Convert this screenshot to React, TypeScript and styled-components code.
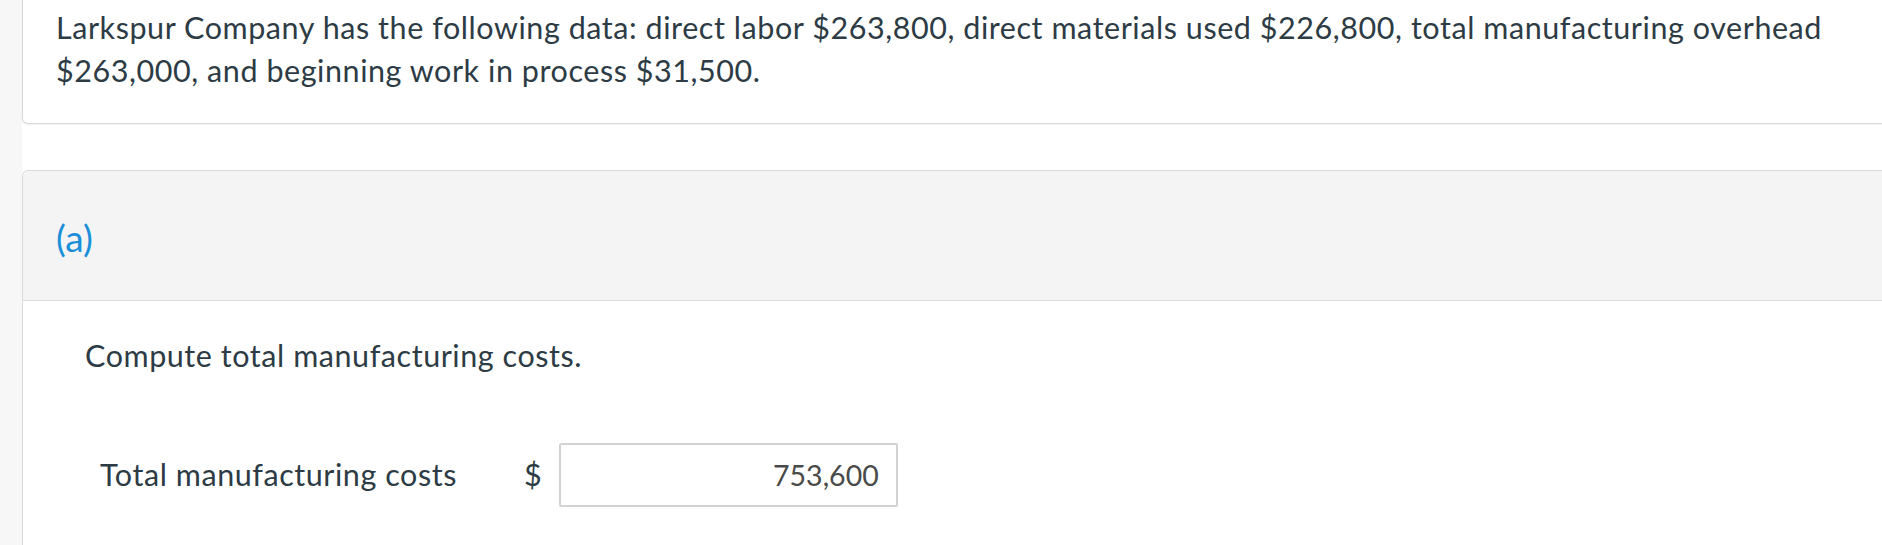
import React, { FC } from "react";
import styled, { createGlobalStyle } from "styled-components";

const GlobalStyle = createGlobalStyle`
  html, body {
    margin: 0;
    padding: 0;
    background: #ffffff;
    overflow: hidden;
  }
  body {
    font-family: Lato, "Open Sans", "Liberation Sans", sans-serif;
    color: #2d3b45;
  }
`;

const Page = styled.div`
  display: flex;
  width: 1882px;
  height: 545px;
  overflow: hidden;
`;

const Rail = styled.div`
  flex: 0 0 22px;
  background: #f7f7f7;
`;

const Main = styled.div`
  flex: 1;
  display: flex;
  flex-direction: column;
  gap: 46px;
  margin-right: -16px;
`;

const QuestionCard = styled.div`
  background: #ffffff;
  border: 1px solid #d9d9d9;
  border-top: none;
  border-radius: 0 0 6px 6px;
  box-shadow: 0 1px 2px rgba(0, 0, 0, 0.06);
  padding: 6px 40px 31px 33px;
`;

const Prompt = styled.p`
  margin: 0;
  font-size: 30.5px;
  letter-spacing: 0.56px;
  line-height: 43.2px;
`;

const PartCard = styled.section`
  flex: 1;
  background: #ffffff;
  border: 1px solid #dadada;
  border-bottom: none;
  border-radius: 6px 0 0 0;
`;

const PartHeader = styled.header`
  background: #f4f4f4;
  border-bottom: 1px solid #dadada;
  border-radius: 6px 0 0 0;
  padding: 45px 33px 40px;
`;

const PartLabel = styled.h2`
  margin: 0;
  font-size: 37px;
  line-height: 43.2px;
  font-weight: 400;
  color: #1a8fd9;
`;

const PartBody = styled.div`
  padding: 33px 62px 0;
`;

const Instruction = styled.p`
  margin: 0 0 66px;
  font-size: 30.5px;
  letter-spacing: 0.56px;
  line-height: 43.2px;
`;

const AnswerRow = styled.div`
  display: grid;
  grid-template-columns: 424px auto 339px;
  justify-content: start;
  align-items: center;
  padding-left: 15px;
`;

const RowLabel = styled.span`
  font-size: 30.5px;
  letter-spacing: 0.56px;
  line-height: 43.2px;
`;

const Currency = styled.span`
  font-size: 30.5px;
  line-height: 43.2px;
  margin-right: 17px;
`;

const ValueBox = styled.div`
  box-sizing: border-box;
  height: 64px;
  border: 2px solid #d2d2d2;
  border-radius: 2px;
  padding: 0 17px;
  display: flex;
  align-items: center;
  justify-content: flex-end;
  font-size: 28.5px;
  color: #4a4a4a;
`;

const App: FC = () => (
  <>
    <GlobalStyle />
    <Page>
      <Rail />
      <Main>
        <QuestionCard>
          <Prompt>
            Larkspur Company has the following data: direct labor $263,800, direct materials used $226,800, total
            manufacturing overhead $263,000, and beginning work in process $31,500.
          </Prompt>
        </QuestionCard>
        <PartCard>
          <PartHeader>
            <PartLabel>(a)</PartLabel>
          </PartHeader>
          <PartBody>
            <Instruction>Compute total manufacturing costs.</Instruction>
            <AnswerRow>
              <RowLabel>Total manufacturing costs</RowLabel>
              <Currency>$</Currency>
              <ValueBox>753,600</ValueBox>
            </AnswerRow>
          </PartBody>
        </PartCard>
      </Main>
    </Page>
  </>
);

export default App;
